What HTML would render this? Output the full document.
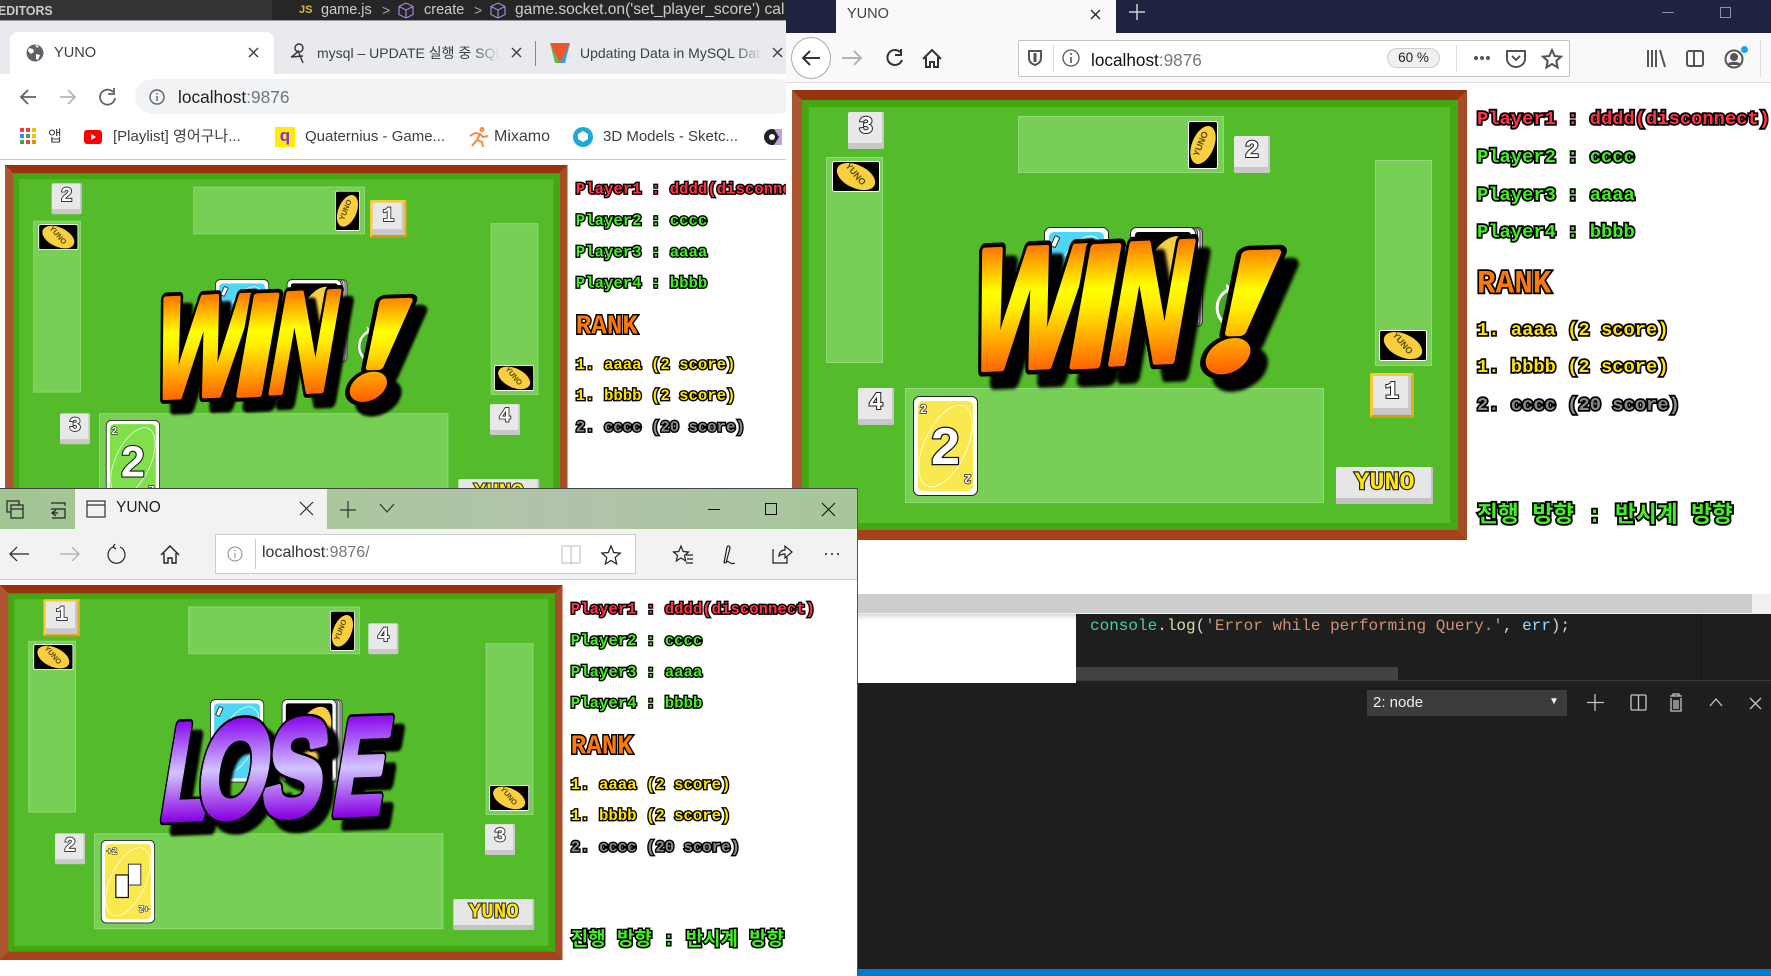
<!DOCTYPE html>
<html><head><meta charset="utf-8"><title>YUNO</title>
<style>
html,body{margin:0;padding:0;width:1771px;height:976px;overflow:hidden;background:#1e1e1e}
*{box-sizing:border-box}
body{font-family:"Liberation Sans","Noto Sans CJK KR",sans-serif}
#root{position:relative;width:1771px;height:976px;overflow:hidden}
.w,.a,.t,svg.i{position:absolute}
.w{left:0;top:0;width:1771px;height:976px}
.t{white-space:nowrap;line-height:20px;height:20px}
.g{position:absolute;width:675px;height:450px;transform-origin:0 0}
.sc{transform:scale(.8333)}
.f{left:0;top:0;width:675px;height:450px;background:#a5431c;border:10px solid;border-color:#97340e #a64c26 #a5421b #ad5430;box-shadow:inset 0 0 0 1px #8a2c08}
.s{position:absolute;background:#78cf55;border:1px solid #94da7c}
.k{position:absolute;width:36px;height:37px;background:#e8e8e8;border-radius:2px;box-shadow:inset -2px -6px 0 #c8c8c8;font:bold 24px/31px "Liberation Mono",monospace;text-align:center;color:#fff;-webkit-text-stroke:2px #222;paint-order:stroke fill}
.k.y{width:44px;height:45px;border:3px solid #f6c935;border-bottom-color:#cf9d12;border-right-color:#e0ae20;line-height:33px;box-shadow:inset -3px -7px 0 #c8c8c8}
.p{position:absolute;left:685px;white-space:nowrap;font:bold 18.8px/20px "Liberation Mono","Noto Sans CJK KR",monospace;-webkit-text-stroke:3.4px #000;paint-order:stroke fill}
.r{color:#ff3344}.n{color:#44ee22}.e{color:#ffe600}.q{color:#8a8a8a}
.ru{color:#ff7a00;font-size:31px;line-height:32px;transform:scaleY(1.05);transform-origin:0 50%}
.d{font-size:22.7px;line-height:24px;-webkit-text-stroke:3.6px #000}
.yb{position:absolute;left:544px;top:377px;width:97px;height:37px;background:#e6e6e6;border-radius:2px;box-shadow:inset -2px -6px 0 #c2c2c2;text-align:center;font:bold 25px/31px "Liberation Mono",monospace;color:#ffe600;-webkit-text-stroke:2.4px #222;paint-order:stroke fill}
svg{overflow:visible}
svg text{font-family:"Liberation Sans",sans-serif}
.bc{font-weight:bold;fill:#5a4a10}
.l{stroke:#000;stroke-width:15px;stroke-linejoin:round;font-weight:bold;paint-order:stroke}
.fl{stroke-width:6px;stroke-linejoin:round;font-weight:bold}
.ol{fill:none;stroke:#000;stroke-width:15px;stroke-linejoin:round;font-weight:bold}
.sh{filter:drop-shadow(12px 13px 1.5px #000)}
svg text.se{font-family:"Liberation Serif",serif}
</style></head><body>
<div id="root">

<svg width="0" height="0" style="position:absolute"><defs>
<linearGradient id="gw" gradientUnits="userSpaceOnUse" x1="0" y1="-122" x2="0" y2="4"><stop offset="0" stop-color="#ff7400"/><stop offset=".36" stop-color="#ffff00"/><stop offset=".5" stop-color="#ffee00"/><stop offset="1" stop-color="#ff6200"/></linearGradient>
<linearGradient id="gl" gradientUnits="userSpaceOnUse" x1="0" y1="-114" x2="0" y2="4"><stop offset="0" stop-color="#8c10ee"/><stop offset=".5" stop-color="#d2c4ff"/><stop offset="1" stop-color="#8800e0"/></linearGradient>
</defs></svg>

<!-- VS CODE BACKGROUND -->
<div class="a" style="left:0;top:0;width:272px;height:20px;background:#333"></div>
<div class="a" style="left:272px;top:0;width:520px;height:20px;background:#262627"></div>
<div class="t" style="left:-2px;top:1px;color:#ccc;font-weight:bold;font-size:13px;transform:scaleX(.95);transform-origin:0 0">EDITORS</div>
<div class="t" style="left:299px;top:0;color:#d7ba3c;font-weight:bold;font-size:11px">JS</div>
<div class="t" style="left:321px;top:0;color:#ccc;font-size:14.500px">game.js</div>
<div class="t" style="left:382px;top:0;color:#aaa;font-size:14px">&gt;</div>
<svg class="i" style="left:398px;top:2px" width="16" height="17" fill="none" stroke="#a184d6" stroke-width="1.2"><path d="M8 1l7 3.500v8L8 16 1 12.500v-8zM1 4.500L8 8l7-3.500M8 8v8"/></svg>
<div class="t" style="left:424px;top:0;color:#ccc;font-size:14.500px">create</div>
<div class="t" style="left:474px;top:0;color:#aaa;font-size:14px">&gt;</div>
<svg class="i" style="left:490px;top:2px" width="16" height="17" fill="none" stroke="#a184d6" stroke-width="1.2"><path d="M8 1l7 3.500v8L8 16 1 12.500v-8zM1 4.500L8 8l7-3.500M8 8v8"/></svg>
<div class="t" style="left:515px;top:0;color:#ccc;font-size:15.6px">game.socket.on('set_player_score') cal</div>

<div class="a" style="left:858px;top:614px;width:913px;height:355px;background:#1e1e1e"></div>
<div class="a" style="left:858px;top:614px;width:218px;height:69px;background:#fff;box-shadow:inset 0 6px 6px -4px #ccc"></div>
<div class="a" style="left:1076px;top:667px;width:322px;height:14px;background:#424242"></div>
<div class="a" style="left:1076px;top:680px;width:695px;height:1px;background:#3a3a3a"></div>
<div class="a" style="left:1701px;top:614px;width:1px;height:66px;background:#171717"></div>
<div class="t" style="left:1090px;top:616px;font:16px/20px 'Liberation Mono',monospace;color:#d4d4d4"><span style="color:#4ec9b0">console</span>.<span style="color:#dcdcaa">log</span>(<span style="color:#ce9178">'Error while performing Query.'</span>, <span style="color:#9cdcfe">err</span>);</div>
<div class="a" style="left:1367px;top:690px;width:200px;height:26px;background:#3c3c3c"></div>
<div class="t" style="left:1373px;top:693px;font-size:15px;color:#eee">2: node</div>
<div class="t" style="left:1549px;top:692px;font-size:10px;color:#eee">▼</div>
<svg class="i" style="left:1585px;top:692px" width="180" height="22" fill="none" stroke="#c5c5c5" stroke-width="1.3"><path d="M10 2v17M2 10.500h17"/><rect x="46" y="3" width="15" height="15" rx="1"/><path d="M53.500 3v15"/><path d="M85 4h12M88 4V2h6v2M86 6v13h10V6M89 8v9M91 8v9M93 8v9"/><path d="M125 14l6-7 6 7"/><path d="M165 6l11 11M176 6l-11 11"/></svg>
<div class="a" style="left:858px;top:969px;width:913px;height:7px;background:#007acc"></div>

<!-- CHROME -->
<div class="w" style="clip-path:inset(20px 985px 0 0)">
<div class="a" style="left:0;top:20px;width:786px;height:54px;background:#e8eaed;border-top:1px solid #999"></div>
<div class="a" style="left:10px;top:32px;width:264px;height:42px;background:#fff;border-radius:8px 8px 0 0"></div>
<svg class="i" style="left:26px;top:44px" width="18" height="18"><circle cx="9" cy="9" r="8.500" fill="#5f6368"/><path d="M3 4l4 1 1 3-3 2-3-3zM10 10l4 1-2 5-2-1zM9 1l4 1-2 2z" fill="#fff"/></svg>
<div class="t" style="left:54px;top:43px;font-size:14.600px;color:#3c4043">YUNO</div>
<svg class="i" style="left:248px;top:47px" width="11" height="11" stroke="#444" stroke-width="1.500"><path d="M1 1l9 9M10 1l-9 9"/></svg>
<svg class="i" style="left:289px;top:42px" width="18" height="22" fill="none" stroke="#333" stroke-width="1.400"><circle cx="10" cy="6" r="4"/><path d="M2 15c3-1 6-5 7-6l5 12M2 15l12-1"/></svg>
<div class="t" style="left:317px;top:43px;width:183px;height:22px;overflow:hidden;font-size:14px;color:#3c4043;-webkit-mask-image:linear-gradient(90deg,#000 85%,transparent)">mysql – UPDATE 실행 중 SQL</div>
<svg class="i" style="left:511px;top:47px" width="11" height="11" stroke="#444" stroke-width="1.500"><path d="M1 1l9 9M10 1l-9 9"/></svg>
<div class="a" style="left:535px;top:41px;width:1px;height:25px;background:#888"></div>
<svg class="i" style="left:550px;top:43px" width="20" height="20"><path d="M0 0h7l3 20H5z" fill="#63b84a"/><path d="M13 0h7l-5 20h-5z" fill="#35a0e0"/><path d="M0 0h20l-10 20z" fill="#f2552c"/></svg>
<div class="t" style="left:580px;top:43px;width:182px;height:22px;overflow:hidden;font-size:14px;color:#3c4043;-webkit-mask-image:linear-gradient(90deg,#000 85%,transparent)">Updating Data in MySQL Database</div>
<svg class="i" style="left:772px;top:47px" width="11" height="11" stroke="#444" stroke-width="1.500"><path d="M1 1l9 9M10 1l-9 9"/></svg>

<div class="a" style="left:0;top:74px;width:786px;height:43px;background:#fff"></div>
<svg class="i" style="left:18px;top:87px" width="110" height="20" fill="none" stroke-width="1.800"><path d="M18 10H3M10 3l-7 7 7 7" stroke="#5f6368"/><path d="M42 10h15M50 3l7 7-7 7" stroke="#b4b7ba"/><path d="M95 5a7.500 7.500 0 1 0 2 6M96 1v6h-6" stroke="#5f6368"/></svg>
<div class="a" style="left:135px;top:79px;width:660px;height:35px;background:#f1f3f4;border-radius:18px"></div>
<svg class="i" style="left:149px;top:89px" width="16" height="16" fill="none" stroke="#5f6368" stroke-width="1.400"><circle cx="8" cy="8" r="7"/><path d="M8 7v5M8 4v1.500"/></svg>
<div class="t" style="left:178px;top:87px;font-size:17.300px;color:#202124">localhost<span style="color:#70757a">:9876</span></div>

<div class="a" style="left:0;top:117px;width:786px;height:42px;background:#fff"></div>
<div class="a" style="left:0;top:159px;width:786px;height:1px;background:#c8c8c8"></div>
<svg class="i" style="left:20px;top:128px" width="17" height="17"><g><rect x="0" y="0" width="4" height="4" fill="#ea4335"/><rect x="6" y="0" width="4" height="4" fill="#ea4335"/><rect x="12" y="0" width="4" height="4" fill="#fbbc05"/><rect x="0" y="6" width="4" height="4" fill="#4285f4"/><rect x="6" y="6" width="4" height="4" fill="#34a853"/><rect x="12" y="6" width="4" height="4" fill="#fbbc05"/><rect x="0" y="12" width="4" height="4" fill="#34a853"/><rect x="6" y="12" width="4" height="4" fill="#ea4335"/><rect x="12" y="12" width="4" height="4" fill="#ea8c05"/></g></svg>
<div class="t" style="left:48px;top:127px;font-size:15px;color:#3c4043">앱</div>
<svg class="i" style="left:84px;top:130px" width="18" height="14"><rect width="18" height="14" rx="3" fill="#f00"/><path d="M7 4l5 3-5 3z" fill="#fff"/></svg>
<div class="t" style="left:113px;top:127px;font-size:15px;color:#3c4043">[Playlist] 영어구나...</div>
<div class="a" style="left:275px;top:127px;width:20px;height:20px;background:#ffee00;color:#8a2be2;font:bold 17px/17px 'Liberation Sans',sans-serif;text-align:center">q</div>
<div class="t" style="left:305px;top:127px;font-size:15px;color:#3c4043">Quaternius - Game...</div>
<svg class="i" style="left:468px;top:127px" width="22" height="20" fill="none" stroke="#f58a3c" stroke-width="2"><circle cx="14" cy="2.500" r="1.500"/><path d="M2 9l5-3 5 1-3 6 5 2 1 5M9 13l-5 6M12 7l3 3 5-1"/></svg>
<div class="t" style="left:494px;top:127px;font-size:16px;color:#3c4043">Mixamo</div>
<svg class="i" style="left:573px;top:127px" width="20" height="20"><circle cx="10" cy="10" r="10" fill="#1caad9"/><path d="M10 4l5 3v5l-5 3-5-3V7z" fill="#fff"/></svg>
<div class="t" style="left:603px;top:127px;font-size:15px;color:#3c4043">3D Models - Sketc...</div>
<svg class="i" style="left:763px;top:127px" width="20" height="20"><circle cx="9" cy="10" r="8" fill="#222"/><circle cx="9" cy="10" r="3" fill="#fff"/><path d="M11 2h8v16h-8l5-8z" fill="#b9a4e0"/></svg>

<div class="a" style="left:0;top:160px;width:786px;height:816px;background:#fff"></div>

<div class="g sc" style="left:5px;top:165px">
<div class="a f"></div>
<div class="a" style="left:10px;top:10px;width:656px;height:430px;background:#44a815"></div>
<div class="a" style="left:17px;top:17px;width:641px;height:416px;background:#54bc2a"></div>
<div class="s" style="left:226px;top:26px;width:206px;height:57px"></div>
<div class="s" style="left:34px;top:67px;width:57px;height:206px"></div>
<div class="s" style="left:583px;top:70px;width:57px;height:206px"></div>
<div class="s" style="left:113px;top:298px;width:419px;height:115px"></div>
<svg class="i" style="left:396px;top:31px" width="30" height="48"><rect x=".5" y=".5" width="29" height="47" rx="2" fill="#000" stroke="#fff"/><ellipse cx="15" cy="24" rx="11" ry="20" transform="rotate(22 15 24)" fill="#f9cf3f"/><text class="bc" font-size="9" transform="translate(10.500 36) rotate(-68)">YUNO</text></svg>
<svg class="i" style="left:40px;top:71px" width="48" height="31"><rect x=".5" y=".5" width="47" height="30" rx="2" fill="#000" stroke="#fff"/><ellipse cx="24" cy="15.500" rx="20.500" ry="11.500" transform="rotate(25 24 15.500)" fill="#f9cf3f"/><text class="bc" font-size="9" transform="translate(13 5) rotate(50)">YUNO</text></svg>
<svg class="i" style="left:587px;top:240px" width="48" height="31"><rect x=".5" y=".5" width="47" height="30" rx="2" fill="#000" stroke="#fff"/><ellipse cx="24" cy="15.500" rx="20.500" ry="11.500" transform="rotate(25 24 15.500)" fill="#f9cf3f"/><text class="bc" font-size="9" transform="translate(13 5) rotate(50)">YUNO</text></svg>
<svg class="i" style="left:121px;top:306px" width="65" height="100"><rect x=".5" y=".5" width="64" height="99" rx="6" fill="#fff" stroke="#222"/><rect x="5" y="5" width="55" height="90" rx="5" fill="#7fe04a"/><ellipse cx="32.500" cy="50" rx="21" ry="44" transform="rotate(25 32.500 50)" fill="none" stroke="#fff" stroke-width=".8"/><text x="32.500" y="68" text-anchor="middle" font-size="52" font-weight="bold" fill="#fff" stroke="#111" stroke-width="2.500" paint-order="stroke">2</text><text x="7" y="17" font-size="12" font-weight="bold" fill="#fff" stroke="#222" stroke-width="1.500" paint-order="stroke">2</text><text transform="rotate(180 58 83)" x="58" y="87" font-size="12" font-weight="bold" fill="#fff" stroke="#222" stroke-width="1.500" paint-order="stroke">2</text></svg>
<svg class="i" style="left:252px;top:137px" width="65" height="100"><rect x=".5" y=".5" width="64" height="99" rx="6" fill="#fff" stroke="#222"/><rect x="5" y="5" width="55" height="90" rx="5" fill="#4dd6f6"/><ellipse cx="32.500" cy="50" rx="21" ry="44" transform="rotate(25 32.500 50)" fill="none" stroke="#fff" stroke-width=".8"/><rect x="9" y="9" width="5" height="11" rx="1" transform="rotate(25 11 14)" fill="#fff" stroke="#222"/></svg>
<svg class="i" style="left:338px;top:137px" width="74" height="100"><rect x="7.500" y=".5" width="65" height="99" rx="5" fill="#bbb" stroke="#333"/><rect x="5" y=".5" width="65" height="99" rx="5" fill="#eee" stroke="#444"/><rect x="2.500" y=".5" width="65" height="99" rx="5" fill="#aaa" stroke="#444"/><rect x=".5" y=".5" width="65" height="99" rx="6" fill="#fff" stroke="#222"/><rect x="5" y="5" width="56" height="90" rx="3" fill="#000"/><ellipse cx="33" cy="50" rx="21" ry="44" transform="rotate(25 33 50)" fill="#f9cf3f"/></svg>
<svg class="i" style="left:420px;top:190px" width="50" height="50" fill="none"><circle cx="23" cy="28" r="20" fill="#42a81e"/><path d="M16 10A20 20 0 0 0 11 42" stroke="#fff" stroke-width="3"/><path d="M14 4l8 5-7 4z" fill="#fff"/></svg>
<div class="k" style="left:56px;top:22px">2</div>
<div class="k y" style="left:438px;top:42px">1</div>
<div class="k" style="left:66px;top:298px">3</div>
<div class="k" style="left:582px;top:287px">4</div>
<div class="yb">YUNO</div>
<svg class="i" style="left:0;top:0" width="675" height="450"><g class="sh" font-size="172">
<g transform="translate(171 280) rotate(-2.500) skewX(-12.500) scale(.66 1)"><text class="ol">W</text><text class="fl" fill="url(#gw)" stroke="url(#gw)">W</text></g>
<g transform="translate(269 277) rotate(-2.500) skewX(-12.500)"><text class="ol">I</text><text class="fl" fill="url(#gw)" stroke="url(#gw)">I</text></g>
<g transform="translate(311 274) rotate(-2.500) skewX(-12.500) scale(.62 1)"><text class="ol">N</text><text class="fl" fill="url(#gw)" stroke="url(#gw)">N</text></g>
<g transform="translate(398 279) rotate(-2) skewX(-20) scale(1.2 1)"><text class="ol se" style="stroke-width:17px">!</text><text class="fl se" fill="url(#gw)" stroke="url(#gw)" style="stroke-width:8px">!</text></g>
</g></svg>
<div class="p r" style="top:19px">Player1 : dddd(disconnect)</div>
<div class="p n" style="top:57px">Player2 : cccc</div>
<div class="p n" style="top:95px">Player3 : aaaa</div>
<div class="p n" style="top:132px">Player4 : bbbb</div>
<div class="p ru" style="top:179px">RANK</div>
<div class="p e" style="top:230px">1. aaaa (2 score)</div>
<div class="p e" style="top:267px">1. bbbb (2 score)</div>
<div class="p q" style="top:305px">2. cccc (20 score)</div>
</div>
</div>

<!-- FIREFOX -->
<div class="w" style="clip-path:inset(0 0 362px 786px)">
<div class="a" style="left:786px;top:0;width:985px;height:33px;background:#1f2341"></div>
<div class="a" style="left:836px;top:0;width:280px;height:33px;background:#f9f9fa"></div>
<div class="t" style="left:847px;top:4px;font-size:14.500px;color:#444">YUNO</div>
<svg class="i" style="left:1090px;top:9px" width="11" height="11" stroke="#222" stroke-width="1.300"><path d="M1 1l9 9M10 1l-9 9"/></svg>
<svg class="i" style="left:1128px;top:3px" width="18" height="18" stroke="#cfd0d8" stroke-width="1.500"><path d="M9 1v16M1 9h16"/></svg>
<div class="a" style="left:1662px;top:12px;width:12px;height:1px;background:#8d8fa3"></div>
<div class="a" style="left:1720px;top:7px;width:11px;height:11px;border:1px solid #8d8fa3"></div>
<div class="a" style="left:786px;top:33px;width:985px;height:50px;background:#f9f9fa;border-bottom:1px solid #ddd"></div>
<div class="a" style="left:791px;top:37px;width:40px;height:42px;border-radius:50%;background:#fff;border:1px solid #aaa"></div>
<svg class="i" style="left:800px;top:48px" width="150" height="22" fill="none" stroke-width="2"><path d="M20 10H3M10 3l-7 7 7 7" stroke="#333"/><path d="M42 10h18M54 3l7 7-7 7" stroke="#b4b4b4"/><path d="M100 4a7.500 7.500 0 1 0 2 8M101 1v6h-6" stroke="#333"/><path d="M123 11l9-9 9 9M126 9v10h4v-5h4v5h4V9" stroke="#333"/></svg>
<div class="a" style="left:1018px;top:40px;width:552px;height:37px;background:#fff;border:1px solid #c4c4c4;border-radius:2px"></div>
<svg class="i" style="left:1027px;top:49px" width="16" height="18" fill="none" stroke="#555" stroke-width="2"><path d="M2 2h12v7c0 4-3 6-6 7-3-1-6-3-6-7z"/><path d="M8 4v9" stroke-width="3"/></svg>
<div class="a" style="left:1053px;top:45px;width:1px;height:27px;background:#ddd"></div>
<svg class="i" style="left:1062px;top:49px" width="18" height="18" fill="none" stroke="#555" stroke-width="1.300"><circle cx="9" cy="9" r="8"/><path d="M9 8v6M9 4v2" stroke-width="1.600"/></svg>
<div class="t" style="left:1091px;top:50px;font-size:17.200px;color:#111">localhost<span style="color:#777">:9876</span></div>
<div class="a" style="left:1387px;top:48px;width:53px;height:20px;border-radius:10px;background:#f0f0f0;border:1px solid #ccc;font-size:13.500px;line-height:18px;text-align:center;color:#222">60 %</div>
<div class="a" style="left:1456px;top:45px;width:1px;height:27px;background:#ddd"></div>
<svg class="i" style="left:1472px;top:48px" width="90" height="22" fill="none" stroke="#555" stroke-width="2"><g fill="#555" stroke="none"><circle cx="4" cy="10" r="2"/><circle cx="10" cy="10" r="2"/><circle cx="16" cy="10" r="2"/></g><path d="M35 3h18v8c0 5-5 8-9 8s-9-3-9-8z"/><path d="M40 8l4 4 4-4"/><path d="M80 2l2.700 6 6.300.6-4.700 4.400 1.300 6.400L80 16l-5.600 3.400 1.300-6.400L71 8.600l6.300-.6z"/></svg>
<svg class="i" style="left:1646px;top:48px" width="100" height="22" fill="none" stroke="#555" stroke-width="2"><path d="M2 2v17M6 2v17M10 2v17M14 2l5 17"/><rect x="41" y="3" width="16" height="15" rx="2"/><path d="M48 3v15"/><circle cx="88" cy="11" r="8.500"/><circle cx="88" cy="9" r="3" fill="#555"/><path d="M82 17c2-3 10-3 12 0" fill="#555"/></svg>
<div class="a" style="left:1741px;top:46px;width:7px;height:7px;border-radius:50%;background:#0ea5ff"></div>
<div class="a" style="left:1760px;top:40px;width:1px;height:38px;background:#ddd"></div>
<div class="a" style="left:786px;top:83px;width:985px;height:511px;background:#fff"></div>
<div class="a" style="left:786px;top:594px;width:966px;height:19px;background:#cdcdcd"></div>
<div class="a" style="left:1752px;top:594px;width:19px;height:19px;background:#f0f0f0"></div>
<div class="a" style="left:786px;top:613px;width:985px;height:1px;background:#eee"></div>

<div class="g" style="left:792px;top:90px">
<div class="a f"></div>
<div class="a" style="left:10px;top:10px;width:656px;height:430px;background:#44a815"></div>
<div class="a" style="left:17px;top:17px;width:641px;height:416px;background:#54bc2a"></div>
<div class="s" style="left:226px;top:26px;width:206px;height:57px"></div>
<div class="s" style="left:34px;top:67px;width:57px;height:206px"></div>
<div class="s" style="left:583px;top:70px;width:57px;height:206px"></div>
<div class="s" style="left:113px;top:298px;width:419px;height:115px"></div>
<svg class="i" style="left:396px;top:31px" width="30" height="48"><rect x=".5" y=".5" width="29" height="47" rx="2" fill="#000" stroke="#fff"/><ellipse cx="15" cy="24" rx="11" ry="20" transform="rotate(22 15 24)" fill="#f9cf3f"/><text class="bc" font-size="9" transform="translate(10.500 36) rotate(-68)">YUNO</text></svg>
<svg class="i" style="left:40px;top:71px" width="48" height="31"><rect x=".5" y=".5" width="47" height="30" rx="2" fill="#000" stroke="#fff"/><ellipse cx="24" cy="15.500" rx="20.500" ry="11.500" transform="rotate(25 24 15.500)" fill="#f9cf3f"/><text class="bc" font-size="9" transform="translate(13 5) rotate(50)">YUNO</text></svg>
<svg class="i" style="left:587px;top:240px" width="48" height="31"><rect x=".5" y=".5" width="47" height="30" rx="2" fill="#000" stroke="#fff"/><ellipse cx="24" cy="15.500" rx="20.500" ry="11.500" transform="rotate(25 24 15.500)" fill="#f9cf3f"/><text class="bc" font-size="9" transform="translate(13 5) rotate(50)">YUNO</text></svg>
<svg class="i" style="left:121px;top:306px" width="65" height="100"><rect x=".5" y=".5" width="64" height="99" rx="6" fill="#fff" stroke="#222"/><rect x="5" y="5" width="55" height="90" rx="5" fill="#f9e94e"/><ellipse cx="32.500" cy="50" rx="21" ry="44" transform="rotate(25 32.500 50)" fill="none" stroke="#fff" stroke-width=".8"/><text x="32.500" y="68" text-anchor="middle" font-size="52" font-weight="bold" fill="#fff" stroke="#111" stroke-width="2.500" paint-order="stroke">2</text><text x="7" y="17" font-size="12" font-weight="bold" fill="#fff" stroke="#222" stroke-width="1.500" paint-order="stroke">2</text><text transform="rotate(180 58 83)" x="58" y="87" font-size="12" font-weight="bold" fill="#fff" stroke="#222" stroke-width="1.500" paint-order="stroke">2</text></svg>
<svg class="i" style="left:252px;top:137px" width="65" height="100"><rect x=".5" y=".5" width="64" height="99" rx="6" fill="#fff" stroke="#222"/><rect x="5" y="5" width="55" height="90" rx="5" fill="#4dd6f6"/><ellipse cx="32.500" cy="50" rx="21" ry="44" transform="rotate(25 32.500 50)" fill="none" stroke="#fff" stroke-width=".8"/><rect x="9" y="9" width="5" height="11" rx="1" transform="rotate(25 11 14)" fill="#fff" stroke="#222"/></svg>
<svg class="i" style="left:338px;top:137px" width="74" height="100"><rect x="7.500" y=".5" width="65" height="99" rx="5" fill="#bbb" stroke="#333"/><rect x="5" y=".5" width="65" height="99" rx="5" fill="#eee" stroke="#444"/><rect x="2.500" y=".5" width="65" height="99" rx="5" fill="#aaa" stroke="#444"/><rect x=".5" y=".5" width="65" height="99" rx="6" fill="#fff" stroke="#222"/><rect x="5" y="5" width="56" height="90" rx="3" fill="#000"/><ellipse cx="33" cy="50" rx="21" ry="44" transform="rotate(25 33 50)" fill="#f9cf3f"/></svg>
<svg class="i" style="left:420px;top:190px" width="50" height="50" fill="none"><circle cx="23" cy="28" r="20" fill="#42a81e"/><path d="M16 10A20 20 0 0 0 11 42" stroke="#fff" stroke-width="3"/><path d="M14 4l8 5-7 4z" fill="#fff"/></svg>
<div class="k" style="left:56px;top:22px">3</div>
<div class="k" style="left:442px;top:46px">2</div>
<div class="k" style="left:66px;top:298px">4</div>
<div class="k y" style="left:578px;top:283px">1</div>
<div class="yb">YUNO</div>
<svg class="i" style="left:0;top:0" width="675" height="450"><g class="sh" font-size="172">
<g transform="translate(171 280) rotate(-2.500) skewX(-12.500) scale(.66 1)"><text class="ol">W</text><text class="fl" fill="url(#gw)" stroke="url(#gw)">W</text></g>
<g transform="translate(269 277) rotate(-2.500) skewX(-12.500)"><text class="ol">I</text><text class="fl" fill="url(#gw)" stroke="url(#gw)">I</text></g>
<g transform="translate(311 274) rotate(-2.500) skewX(-12.500) scale(.62 1)"><text class="ol">N</text><text class="fl" fill="url(#gw)" stroke="url(#gw)">N</text></g>
<g transform="translate(398 279) rotate(-2) skewX(-20) scale(1.2 1)"><text class="ol se" style="stroke-width:17px">!</text><text class="fl se" fill="url(#gw)" stroke="url(#gw)" style="stroke-width:8px">!</text></g>
</g></svg>
<div class="p r" style="top:19px">Player1 : dddd(disconnect)</div>
<div class="p n" style="top:57px">Player2 : cccc</div>
<div class="p n" style="top:95px">Player3 : aaaa</div>
<div class="p n" style="top:132px">Player4 : bbbb</div>
<div class="p ru" style="top:179px">RANK</div>
<div class="p e" style="top:230px">1. aaaa (2 score)</div>
<div class="p e" style="top:267px">1. bbbb (2 score)</div>
<div class="p q" style="top:305px">2. cccc (20 score)</div>
<div class="p n d" style="top:414px">진행 방향 : 반시계 방향</div>
</div>
</div>

<!-- EDGE -->
<div class="w" style="clip-path:inset(488px 913px 0 0)">
<div class="a" style="left:0;top:488px;width:858px;height:41px;background:linear-gradient(90deg,#a2c594 0%,#a8c89b 35%,#b3c2ab 65%,#a6c79a 100%);border-top:1px solid #444"></div>
<div class="a" style="left:75px;top:489px;width:252px;height:40px;background:#f2f2f2"></div>
<svg class="i" style="left:6px;top:499px" width="60" height="22" fill="none" stroke="#222" stroke-width="1.200"><rect x="1" y="2" width="12" height="11"/><rect x="5" y="6" width="12" height="13" fill="#a8c89b"/><path d="M5 10h12"/><path d="M45 10h14v9H46M45 4h14v3M50 11l-4 3 4 3M46 14h6"/></svg>
<svg class="i" style="left:86px;top:499px" width="20" height="20" fill="none" stroke="#333" stroke-width="1.200"><rect x="1" y="2" width="18" height="16"/><path d="M1 6h18"/></svg>
<div class="t" style="left:116px;top:498px;font-size:15.500px;color:#222">YUNO</div>
<svg class="i" style="left:299px;top:501px" width="15" height="15" stroke="#222" stroke-width="1.100"><path d="M1 1l13 13M14 1L1 14"/></svg>
<svg class="i" style="left:339px;top:500px" width="60" height="18" fill="none" stroke="#333" stroke-width="1.200"><path d="M9 1v17M1 10h16"/><path d="M41 4l7 8 7-8"/></svg>
<div class="a" style="left:708px;top:509px;width:12px;height:1px;background:#111"></div>
<div class="a" style="left:765px;top:503px;width:12px;height:12px;border:1px solid #111"></div>
<svg class="i" style="left:822px;top:503px" width="13" height="13" stroke="#111" stroke-width="1.100"><path d="M0 0l13 13M13 0L0 13"/></svg>
<div class="a" style="left:0;top:529px;width:858px;height:50px;background:#f2f2f2"></div>
<svg class="i" style="left:9px;top:544px" width="175" height="22" fill="none" stroke-width="1.200"><path d="M20 10H1M8 3l-7 7 7 7" stroke="#222"/><path d="M51 10h19M63 3l7 7-7 7" stroke="#aaa"/><path d="M104 3a8.500 8.500 0 1 0 7 0M104 3l2-3M104 3l3 2" stroke="#222"/><path d="M152 11l9-9 9 9M155 9v10h4v-5h4v5h4V9" stroke="#222" stroke-width="1.400"/></svg>
<div class="a" style="left:215px;top:534px;width:421px;height:40px;background:#fff;border:1px solid #ccc"></div>
<svg class="i" style="left:227px;top:546px" width="16" height="16" fill="none" stroke="#888" stroke-width="1"><circle cx="8" cy="8" r="7"/><path d="M8 7v5M8 4v1.500"/></svg>
<div class="a" style="left:255px;top:539px;width:1px;height:30px;background:#ccc"></div>
<div class="t" style="left:262px;top:543px;font-size:16px;color:#333">localhost<span style="color:#777">:9876/</span></div>
<svg class="i" style="left:561px;top:544px" width="60" height="22" fill="none"><path d="M1 2h8l1 1 1-1h8v17h-8l-1 1-1-1H1zM10 3v16" stroke="#bbb"/><path d="M50 2l2.700 6.500 6.500.6-5 4.400 1.500 6.500-5.700-3.500-5.700 3.500 1.500-6.500-5-4.400 6.500-.6z" stroke="#222" stroke-width="1.200"/></svg>
<svg class="i" style="left:672px;top:544px" width="175" height="22" fill="none" stroke="#222" stroke-width="1.200"><path d="M9 2l2.200 5.500 5.300.5-4 3.500 1.200 5.500L9 14l-4.700 3 1.200-5.500-4-3.500 5.300-.5zM14 11h7M15 15h6M14 19h7"/><path d="M52 19l3-16c1-2 3-1 3 1l-4 15 M52 19c3 0 3-3 5-1s4 2 6 1"/><path d="M102 6h-1v13h14v-6M107 12c0-4 3-6 6-6V2l7 6-7 6v-4c-3 0-5 1-6 2z"/><g fill="#222" stroke="none"><circle cx="154" cy="10" r="1"/><circle cx="160" cy="10" r="1"/><circle cx="166" cy="10" r="1"/></g></svg>
<div class="a" style="left:0;top:579px;width:858px;height:397px;background:#fff;border-top:1px solid #ccc"></div>
<div class="a" style="left:857px;top:488px;width:1px;height:488px;background:#555"></div>

<div class="g sc" style="left:0;top:585px">
<div class="a f"></div>
<div class="a" style="left:10px;top:10px;width:656px;height:430px;background:#44a815"></div>
<div class="a" style="left:17px;top:17px;width:641px;height:416px;background:#54bc2a"></div>
<div class="s" style="left:226px;top:26px;width:206px;height:57px"></div>
<div class="s" style="left:34px;top:67px;width:57px;height:206px"></div>
<div class="s" style="left:583px;top:70px;width:57px;height:206px"></div>
<div class="s" style="left:113px;top:298px;width:419px;height:115px"></div>
<svg class="i" style="left:396px;top:31px" width="30" height="48"><rect x=".5" y=".5" width="29" height="47" rx="2" fill="#000" stroke="#fff"/><ellipse cx="15" cy="24" rx="11" ry="20" transform="rotate(22 15 24)" fill="#f9cf3f"/><text class="bc" font-size="9" transform="translate(10.500 36) rotate(-68)">YUNO</text></svg>
<svg class="i" style="left:40px;top:71px" width="48" height="31"><rect x=".5" y=".5" width="47" height="30" rx="2" fill="#000" stroke="#fff"/><ellipse cx="24" cy="15.500" rx="20.500" ry="11.500" transform="rotate(25 24 15.500)" fill="#f9cf3f"/><text class="bc" font-size="9" transform="translate(13 5) rotate(50)">YUNO</text></svg>
<svg class="i" style="left:587px;top:240px" width="48" height="31"><rect x=".5" y=".5" width="47" height="30" rx="2" fill="#000" stroke="#fff"/><ellipse cx="24" cy="15.500" rx="20.500" ry="11.500" transform="rotate(25 24 15.500)" fill="#f9cf3f"/><text class="bc" font-size="9" transform="translate(13 5) rotate(50)">YUNO</text></svg>
<svg class="i" style="left:121px;top:306px" width="65" height="100"><rect x=".5" y=".5" width="64" height="99" rx="6" fill="#fff" stroke="#222"/><rect x="5" y="5" width="55" height="90" rx="5" fill="#f9e94e"/><ellipse cx="32.500" cy="50" rx="21" ry="44" transform="rotate(25 32.500 50)" fill="none" stroke="#fff" stroke-width=".8"/><rect x="33" y="29" width="15" height="25" fill="#fff" stroke="#111"/><rect x="18" y="42" width="15" height="27" fill="#fff" stroke="#111" stroke-width="1.500"/><text x="7" y="17" font-size="11" font-weight="bold" fill="#fff" stroke="#222" stroke-width="1.300" paint-order="stroke">+2</text><text transform="rotate(180 52 83)" x="46" y="87" font-size="11" font-weight="bold" fill="#fff" stroke="#222" stroke-width="1.300" paint-order="stroke">+2</text></svg>
<svg class="i" style="left:252px;top:137px" width="65" height="100"><rect x=".5" y=".5" width="64" height="99" rx="6" fill="#fff" stroke="#222"/><rect x="5" y="5" width="55" height="90" rx="5" fill="#4dd6f6"/><ellipse cx="32.500" cy="50" rx="21" ry="44" transform="rotate(25 32.500 50)" fill="none" stroke="#fff" stroke-width=".8"/><rect x="9" y="9" width="5" height="11" rx="1" transform="rotate(25 11 14)" fill="#fff" stroke="#222"/><rect x="51" y="80" width="5" height="11" rx="1" transform="rotate(25 53 85)" fill="#fff" stroke="#222"/></svg>
<svg class="i" style="left:338px;top:137px" width="74" height="100"><rect x="7.500" y=".5" width="65" height="99" rx="5" fill="#bbb" stroke="#333"/><rect x="5" y=".5" width="65" height="99" rx="5" fill="#eee" stroke="#444"/><rect x="2.500" y=".5" width="65" height="99" rx="5" fill="#aaa" stroke="#444"/><rect x=".5" y=".5" width="65" height="99" rx="6" fill="#fff" stroke="#222"/><rect x="5" y="5" width="56" height="90" rx="3" fill="#000"/><ellipse cx="33" cy="50" rx="21" ry="44" transform="rotate(25 33 50)" fill="#f9cf3f"/></svg>
<div class="k y" style="left:52px;top:17px">1</div>
<div class="k" style="left:442px;top:46px">4</div>
<div class="k" style="left:66px;top:298px">2</div>
<div class="k" style="left:582px;top:287px">3</div>
<div class="yb">YUNO</div>
<svg class="i" style="left:0;top:0" width="675" height="450"><g class="sh" font-size="162">
<g transform="translate(190 281) rotate(-2) skewX(-11.300) scale(.56 1)"><text class="ol">L</text><text class="fl" fill="url(#gl)" stroke="url(#gl)" style="stroke-width:9px">L</text></g>
<g transform="translate(396 275) rotate(-2) skewX(-11.300) scale(.56 1)"><text class="ol">E</text><text class="fl" fill="url(#gl)" stroke="url(#gl)" style="stroke-width:9px">E</text></g>
<g transform="translate(311 277) rotate(-2) skewX(-11.300) scale(.66 1)"><text class="ol">S</text><text class="fl" fill="url(#gl)" stroke="url(#gl)" style="stroke-width:9px">S</text></g>
<g transform="translate(232 279) rotate(-2) skewX(-11.300) scale(.66 1)"><text class="ol">O</text><text class="fl" fill="url(#gl)" stroke="url(#gl)" style="stroke-width:9px">O</text></g>
</g></svg>
<div class="p r" style="top:19px">Player1 : dddd(disconnect)</div>
<div class="p n" style="top:57px">Player2 : cccc</div>
<div class="p n" style="top:95px">Player3 : aaaa</div>
<div class="p n" style="top:132px">Player4 : bbbb</div>
<div class="p ru" style="top:179px">RANK</div>
<div class="p e" style="top:230px">1. aaaa (2 score)</div>
<div class="p e" style="top:267px">1. bbbb (2 score)</div>
<div class="p q" style="top:305px">2. cccc (20 score)</div>
<div class="p n d" style="top:414px">진행 방향 : 반시계 방향</div>
</div>
</div>
</div>
</body></html>
